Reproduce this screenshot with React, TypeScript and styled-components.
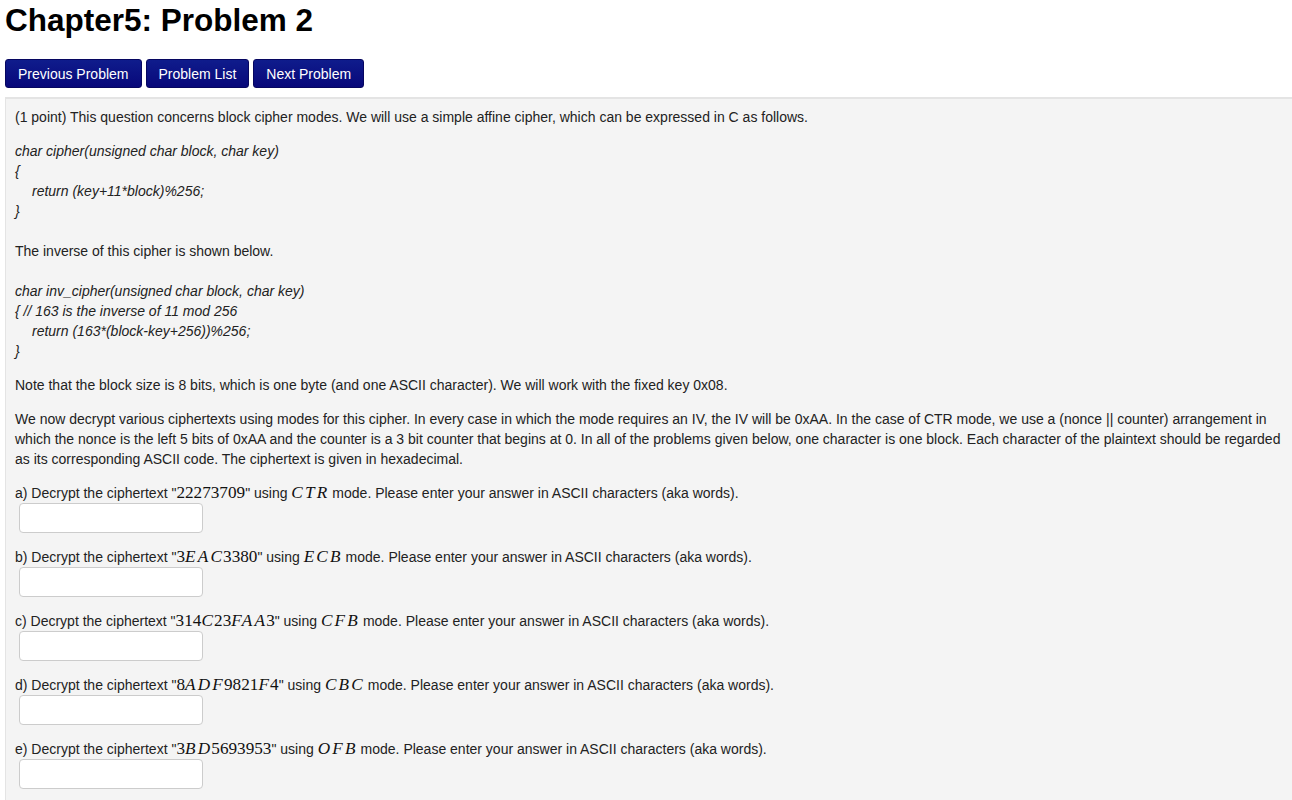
import React from 'react'
import styled, { createGlobalStyle } from 'styled-components'

const GlobalStyle = createGlobalStyle`
  body {
    margin: 0 0 0 5px;
    font-family: "Liberation Sans", Arial, sans-serif;
    color: #222;
    background: #fff;
  }
`

const Title = styled.h1`
  margin: 2px 0 0;
  font-size: 31.5px;
  line-height: 36px;
  font-weight: bold;
  color: #000;
`

const ButtonRow = styled.div`
  display: flex;
  gap: 4px;
  margin-top: 21px;
`

const NavButton = styled.button`
  height: 29px;
  padding: 0 12px;
  font-family: "Liberation Sans", Arial, sans-serif;
  font-size: 14px;
  color: #fff;
  background: linear-gradient(#0f1c8c, #08087a);
  border: 1px solid #060660;
  border-radius: 3px;
  cursor: pointer;
`

const Panel = styled.div`
  margin-top: 9px;
  background: #f4f4f4;
  border-top: 2px solid #e4e4e4;
  border-left: 1px solid #e4e4e4;
  padding: 8px 10px 12px 9px;
  font-size: 14px;
  line-height: 20px;
  color: #222;
`

const Para = styled.p<{ $gap?: number }>`
  margin: 0 0 ${p => p.$gap ?? 14}px;
`

const Code = styled.div<{ $gap?: number }>`
  font-style: italic;
  margin: 0 0 ${p => p.$gap ?? 14}px;
`

const Indent = styled.div`
  padding-left: 17px;
`

const Math = styled.span`
  font-family: "Liberation Serif", "Times New Roman", serif;
  font-size: 17.2px;
  color: #111;
`

const MathVar = styled.i`
  font-style: italic;
  letter-spacing: 2.2px;
  margin-right: -1px;
`

const Question = styled.div`
  margin: 0 0 14px;
`

const AnswerInput = styled.input`
  display: block;
  box-sizing: border-box;
  width: 184px;
  height: 30px;
  margin-left: 4px;
  background: #fff;
  border: 1px solid #ccc;
  border-radius: 4px;
  font-size: 14px;
`

// split a token into italic letters and upright digits, like MathJax does
function MathText({ text }: { text: string }) {
  const parts = text.match(/[A-Za-z]+|[^A-Za-z]+/g) || []
  return (
    <Math>
      {parts.map((part, i) =>
        /[A-Za-z]/.test(part) ? <MathVar key={i}>{part}</MathVar> : <span key={i}>{part}</span>
      )}
    </Math>
  )
}

const questions = [
  { label: 'a', cipher: '22273709', mode: 'CTR' },
  { label: 'b', cipher: '3EAC3380', mode: 'ECB' },
  { label: 'c', cipher: '314C23FAA3', mode: 'CFB' },
  { label: 'd', cipher: '8ADF9821F4', mode: 'CBC' },
  { label: 'e', cipher: '3BD5693953', mode: 'OFB' },
]

export default function App() {
  return (
    <>
      <GlobalStyle />
      <Title>Chapter5: Problem 2</Title>
      <ButtonRow>
        <NavButton>Previous Problem</NavButton>
        <NavButton>Problem List</NavButton>
        <NavButton>Next Problem</NavButton>
      </ButtonRow>
      <Panel>
        <Para>
          (1 point) This question concerns block cipher modes. We will use a simple affine cipher, which can be expressed in C as follows.
        </Para>
        <Code $gap={20}>
          <div>char cipher(unsigned char block, char key)</div>
          <div>{'{'}</div>
          <Indent>return (key+11*block)%256;</Indent>
          <div>{'}'}</div>
        </Code>
        <Para $gap={20}>The inverse of this cipher is shown below.</Para>
        <Code>
          <div>char inv_cipher(unsigned char block, char key)</div>
          <div>{'{'} // 163 is the inverse of 11 mod 256</div>
          <Indent>return (163*(block-key+256))%256;</Indent>
          <div>{'}'}</div>
        </Code>
        <Para>
          Note that the block size is 8 bits, which is one byte (and one ASCII character). We will work with the fixed key 0x08.
        </Para>
        <Para>
          We now decrypt various ciphertexts using modes for this cipher. In every case in which the mode requires an IV, the IV will be 0xAA. In the case of CTR mode, we use a (nonce || counter) arrangement in which the nonce is the left 5 bits of 0xAA and the counter is a 3 bit counter that begins at 0. In all of the problems given below, one character is one block. Each character of the plaintext should be regarded as its corresponding ASCII code. The ciphertext is given in hexadecimal.
        </Para>
        {questions.map(q => (
          <Question key={q.label}>
            <div>
              {q.label}) Decrypt the ciphertext "<MathText text={q.cipher} />" using <MathText text={q.mode} /> mode. Please enter your answer in ASCII characters (aka words).
            </div>
            <AnswerInput type="text" />
          </Question>
        ))}
      </Panel>
    </>
  )
}
